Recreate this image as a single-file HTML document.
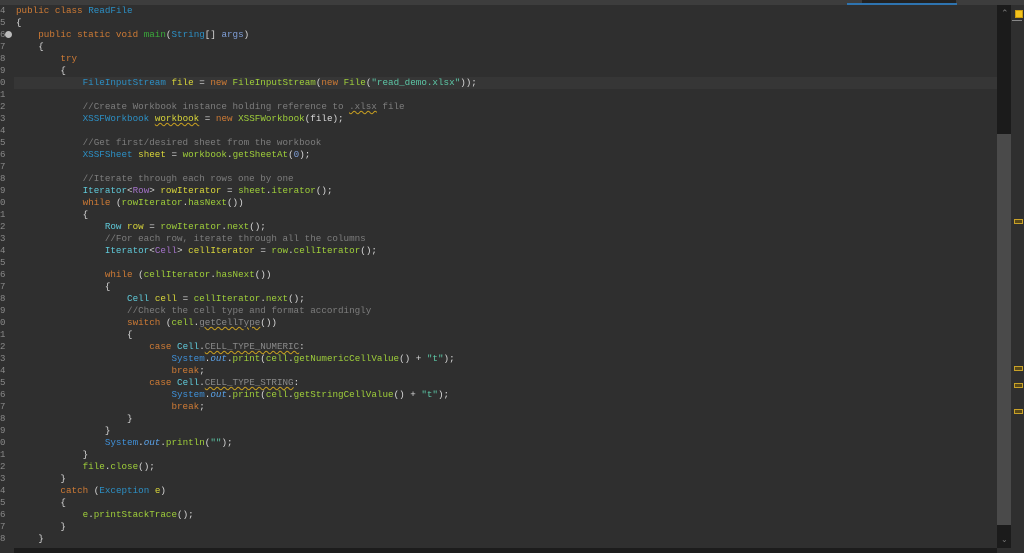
<!DOCTYPE html>
<html><head><meta charset="utf-8"><style>
html,body{margin:0;padding:0;width:1024px;height:553px;overflow:hidden;background:#2f2f2f}
.top{position:absolute;left:0;top:0;width:1024px;height:5px;background:#3d3d3d}
.tab{position:absolute;left:862px;top:0;width:94px;height:5px;background:#222}
.tabl{position:absolute;left:847px;top:3px;width:110px;height:2px;background:#2e74b0}
.ln{position:absolute;left:0;width:14px;height:12px;font:9px/12px "Liberation Mono",monospace;color:#8a8a8a;text-align:left;overflow:hidden;direction:rtl}
.code{position:absolute;left:16px;height:12px;white-space:pre;font:9.25px/12px "Liberation Mono",monospace;color:#d9d9d9}
.k{color:#cf7b35}.c{color:#2c8fc4}.m{color:#3aaa3a}.p{color:#7f9fd8}
.v{color:#d8d53a}.f{color:#9fcf3a}.cm{color:#7d7d7d}.s{color:#5cc7a6}
.t{color:#5fc9d9}.g{color:#a372c8}.o{color:#5aa3ea;font-style:italic}.sy{color:#3f90d8}
.st{color:#8a8a8a;text-decoration:line-through;text-decoration-color:#888}
.w{text-decoration:underline wavy #c9a020;text-decoration-thickness:1px}
.hl{position:absolute;left:14px;top:77px;width:983px;height:12px;background:#363636}
.sb{position:absolute;left:997px;top:5px;width:14px;height:543px;background:#1b1b1b}
.th{position:absolute;left:997px;top:134px;width:14px;height:391px;background:#4a4a4a}
.ov{position:absolute;left:1011px;top:5px;width:13px;height:548px;background:#2f2f2f}
.mk{position:absolute;left:1014px;width:7px;height:3px;border:1px solid #c9a228;background:#5a4a18}
.bot{position:absolute;left:14px;top:548px;width:983px;height:5px;background:#1c1c1c}
</style></head><body>
<div class="top"></div><div class="tab"></div><div class="tabl"></div>
<div class="hl"></div>
<div class="sb"></div><div class="th"></div><div class="ov"></div>
<div style="position:absolute;left:1015px;top:10px;width:6px;height:6px;background:#f2c21c;border:1px solid #c99a10"></div>
<div style="position:absolute;left:1012px;top:20px;width:10px;height:1px;background:#888"></div>
<div style="position:absolute;left:1001px;top:9px;color:#777;font:9px/10px 'DejaVu Sans',sans-serif">⌃</div>
<div style="position:absolute;left:1001px;top:535px;color:#777;font:8px/10px 'DejaVu Sans',sans-serif">⌄</div>
<div class="mk" style="top:219px"></div><div class="mk" style="top:366px"></div><div class="mk" style="top:383px"></div><div class="mk" style="top:409px"></div>
<div class="bot"></div>
<div style="position:absolute;left:5px;top:31px;width:7px;height:7px;border-radius:50%;background:#bbb"></div>

<div class="ln" style="top:5px">4</div><div class="code" style="top:5px"><span class="k">public class</span> <span class="c">ReadFile</span></div>
<div class="ln" style="top:17px">5</div><div class="code" style="top:17px">{</div>
<div class="ln" style="top:29px">6</div><div class="code" style="top:29px">    <span class="k">public static void</span> <span class="m">main</span>(<span class="c">String</span>[] <span class="p">args</span>)</div>
<div class="ln" style="top:41px">7</div><div class="code" style="top:41px">    {</div>
<div class="ln" style="top:53px">8</div><div class="code" style="top:53px">        <span class="k">try</span></div>
<div class="ln" style="top:65px">9</div><div class="code" style="top:65px">        {</div>
<div class="ln" style="top:77px">0</div><div class="code" style="top:77px">            <span class="c">FileInputStream</span> <span class="v">file</span> = <span class="k">new</span> <span class="f">FileInputStream</span>(<span class="k">new</span> <span class="f">File</span>(<span class="s">"read_demo.xlsx"</span>));</div>
<div class="ln" style="top:89px">1</div>
<div class="ln" style="top:101px">2</div><div class="code" style="top:101px">            <span class="cm">//Create Workbook instance holding reference to <span class="w">.xlsx</span> file</span></div>
<div class="ln" style="top:113px">3</div><div class="code" style="top:113px">            <span class="c">XSSFWorkbook</span> <span class="v w">workbook</span> = <span class="k">new</span> <span class="f">XSSFWorkbook</span>(file);</div>
<div class="ln" style="top:125px">4</div>
<div class="ln" style="top:137px">5</div><div class="code" style="top:137px">            <span class="cm">//Get first/desired sheet from the workbook</span></div>
<div class="ln" style="top:149px">6</div><div class="code" style="top:149px">            <span class="c">XSSFSheet</span> <span class="v">sheet</span> = <span class="f">workbook</span>.<span class="f">getSheetAt</span>(<span class="p">0</span>);</div>
<div class="ln" style="top:161px">7</div>
<div class="ln" style="top:173px">8</div><div class="code" style="top:173px">            <span class="cm">//Iterate through each rows one by one</span></div>
<div class="ln" style="top:185px">9</div><div class="code" style="top:185px">            <span class="t">Iterator</span>&lt;<span class="g">Row</span>&gt; <span class="v">rowIterator</span> = <span class="f">sheet</span>.<span class="f">iterator</span>();</div>
<div class="ln" style="top:197px">0</div><div class="code" style="top:197px">            <span class="k">while</span> (<span class="f">rowIterator</span>.<span class="f">hasNext</span>())</div>
<div class="ln" style="top:209px">1</div><div class="code" style="top:209px">            {</div>
<div class="ln" style="top:221px">2</div><div class="code" style="top:221px">                <span class="t">Row</span> <span class="v">row</span> = <span class="f">rowIterator</span>.<span class="f">next</span>();</div>
<div class="ln" style="top:233px">3</div><div class="code" style="top:233px">                <span class="cm">//For each row, iterate through all the columns</span></div>
<div class="ln" style="top:245px">4</div><div class="code" style="top:245px">                <span class="t">Iterator</span>&lt;<span class="g">Cell</span>&gt; <span class="v">cellIterator</span> = <span class="f">row</span>.<span class="f">cellIterator</span>();</div>
<div class="ln" style="top:257px">5</div>
<div class="ln" style="top:269px">6</div><div class="code" style="top:269px">                <span class="k">while</span> (<span class="f">cellIterator</span>.<span class="f">hasNext</span>())</div>
<div class="ln" style="top:281px">7</div><div class="code" style="top:281px">                {</div>
<div class="ln" style="top:293px">8</div><div class="code" style="top:293px">                    <span class="t">Cell</span> <span class="v">cell</span> = <span class="f">cellIterator</span>.<span class="f">next</span>();</div>
<div class="ln" style="top:305px">9</div><div class="code" style="top:305px">                    <span class="cm">//Check the cell type and format accordingly</span></div>
<div class="ln" style="top:317px">0</div><div class="code" style="top:317px">                    <span class="k">switch</span> (<span class="f">cell</span>.<span class="st w">getCellType</span>())</div>
<div class="ln" style="top:329px">1</div><div class="code" style="top:329px">                    {</div>
<div class="ln" style="top:341px">2</div><div class="code" style="top:341px">                        <span class="k">case</span> <span class="t">Cell</span>.<span class="st w">CELL_TYPE_NUMERIC</span>:</div>
<div class="ln" style="top:353px">3</div><div class="code" style="top:353px">                            <span class="sy">System</span>.<span class="o">out</span>.<span class="f">print</span>(<span class="f">cell</span>.<span class="f">getNumericCellValue</span>() + <span class="s">"t"</span>);</div>
<div class="ln" style="top:365px">4</div><div class="code" style="top:365px">                            <span class="k">break</span>;</div>
<div class="ln" style="top:377px">5</div><div class="code" style="top:377px">                        <span class="k">case</span> <span class="t">Cell</span>.<span class="st w">CELL_TYPE_STRING</span>:</div>
<div class="ln" style="top:389px">6</div><div class="code" style="top:389px">                            <span class="sy">System</span>.<span class="o">out</span>.<span class="f">print</span>(<span class="f">cell</span>.<span class="f">getStringCellValue</span>() + <span class="s">"t"</span>);</div>
<div class="ln" style="top:401px">7</div><div class="code" style="top:401px">                            <span class="k">break</span>;</div>
<div class="ln" style="top:413px">8</div><div class="code" style="top:413px">                    }</div>
<div class="ln" style="top:425px">9</div><div class="code" style="top:425px">                }</div>
<div class="ln" style="top:437px">0</div><div class="code" style="top:437px">                <span class="sy">System</span>.<span class="o">out</span>.<span class="f">println</span>(<span class="s">""</span>);</div>
<div class="ln" style="top:449px">1</div><div class="code" style="top:449px">            }</div>
<div class="ln" style="top:461px">2</div><div class="code" style="top:461px">            <span class="f">file</span>.<span class="f">close</span>();</div>
<div class="ln" style="top:473px">3</div><div class="code" style="top:473px">        }</div>
<div class="ln" style="top:485px">4</div><div class="code" style="top:485px">        <span class="k">catch</span> (<span class="c">Exception</span> <span class="v">e</span>)</div>
<div class="ln" style="top:497px">5</div><div class="code" style="top:497px">        {</div>
<div class="ln" style="top:509px">6</div><div class="code" style="top:509px">            <span class="f">e</span>.<span class="f">printStackTrace</span>();</div>
<div class="ln" style="top:521px">7</div><div class="code" style="top:521px">        }</div>
<div class="ln" style="top:533px">8</div><div class="code" style="top:533px">    }</div>
</body></html>
